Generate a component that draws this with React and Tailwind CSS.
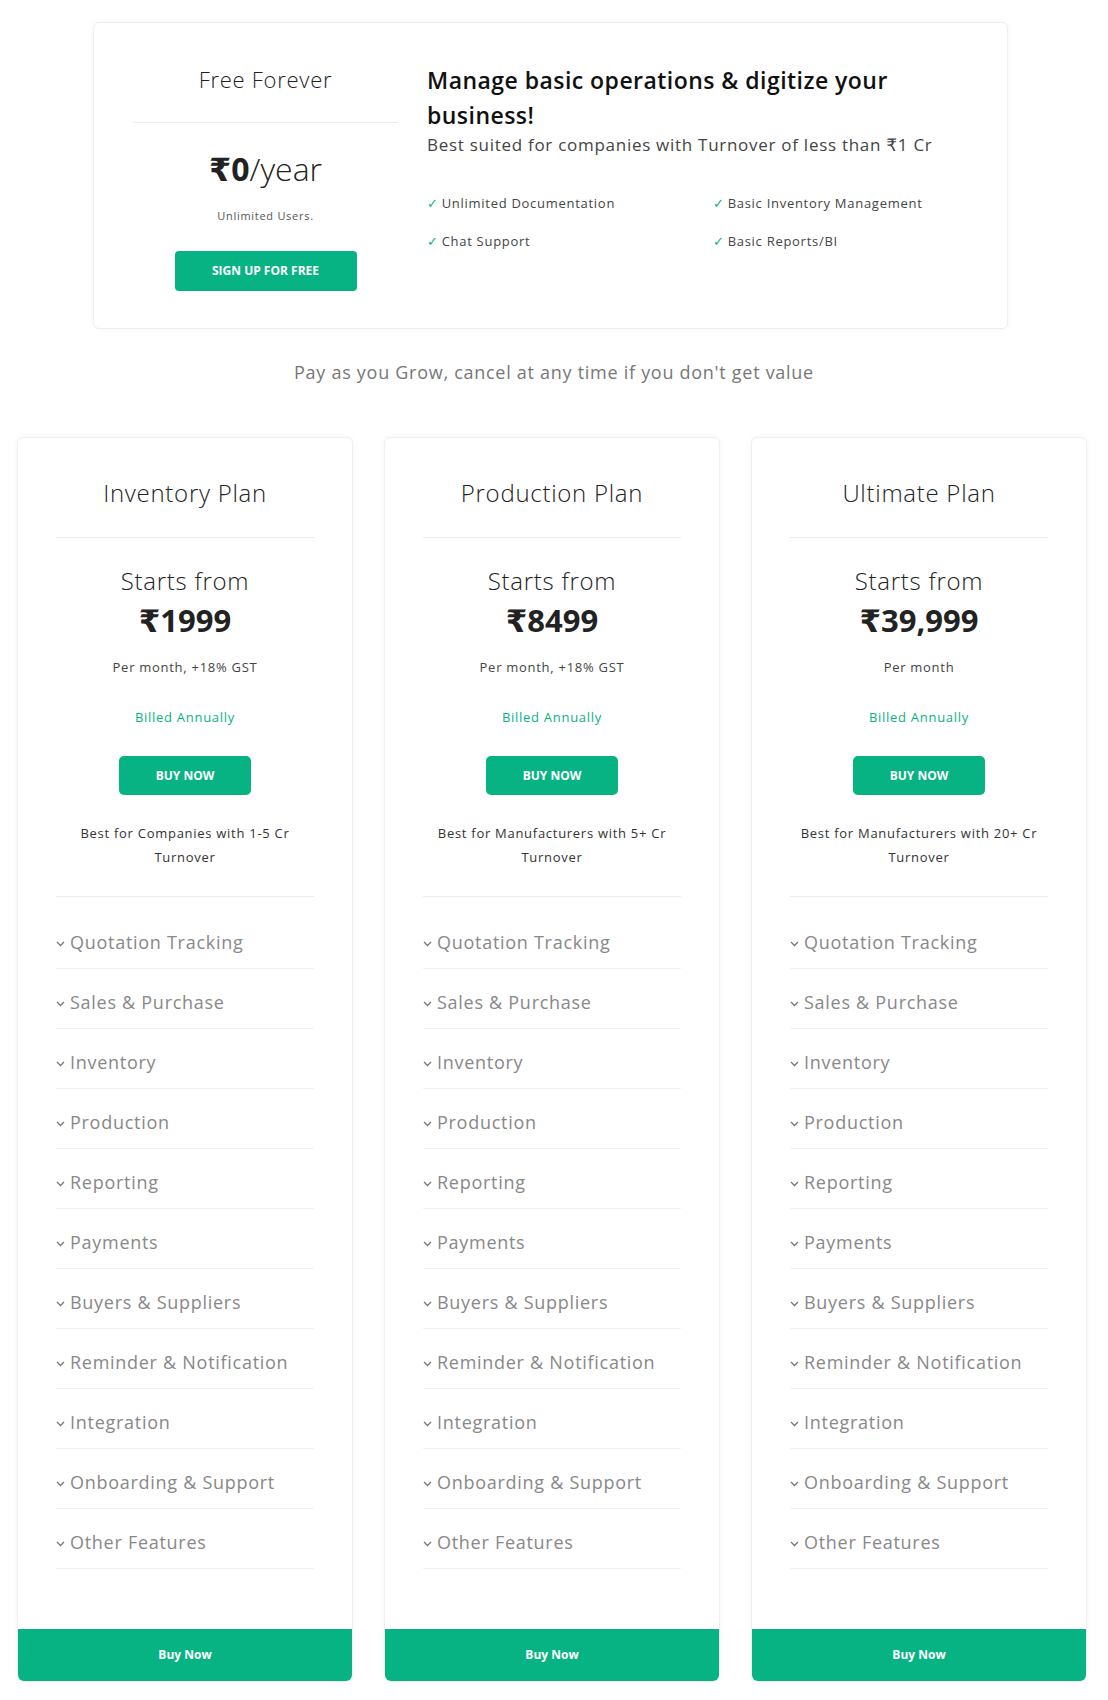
import React from 'react';

const plans = [
  {
    name: 'Inventory Plan',
    price: '₹1999',
    per: 'Per month, +18% GST',
    best: ['Best for Companies with 1-5 Cr', 'Turnover'],
  },
  {
    name: 'Production Plan',
    price: '₹8499',
    per: 'Per month, +18% GST',
    best: ['Best for Manufacturers with 5+ Cr', 'Turnover'],
  },
  {
    name: 'Ultimate Plan',
    price: '₹39,999',
    per: 'Per month',
    best: ['Best for Manufacturers with 20+ Cr', 'Turnover'],
  },
];

const features = [
  'Quotation Tracking',
  'Sales & Purchase',
  'Inventory',
  'Production',
  'Reporting',
  'Payments',
  'Buyers & Suppliers',
  'Reminder & Notification',
  'Integration',
  'Onboarding & Support',
  'Other Features',
];

const freeFeatures = [
  'Unlimited Documentation',
  'Basic Inventory Management',
  'Chat Support',
  'Basic Reports/BI',
];

const Chevron = () => (
  <svg width="9" height="6" viewBox="0 0 9 6" className="mr-[5px] mt-[3px] shrink-0">
    <path d="M1 1l3.5 3.5L8 1" fill="none" stroke="#777" strokeWidth="1.3" />
  </svg>
);

const PlanCard = ({ plan }) => (
  <div className="flex flex-col rounded-md border border-[#efefef] bg-white shadow-[0_0_6px_rgba(0,0,0,0.04)]">
    <div className="px-[38px] pt-[38px] text-center">
      <h3 className="text-[24px] font-light leading-[34px] text-[#222]">{plan.name}</h3>
      <div className="mt-[27px] border-t border-[#ececec]" />
      <p className="mt-[26px] text-[24px] font-light leading-[34px] text-[#222]">Starts from</p>
      <p className="mt-[2px] text-[31px] font-bold leading-[40px] tracking-normal text-[#222]">{plan.price}</p>
      <p className="mt-[17px] text-[13px] font-medium leading-[20px] text-[#444]">{plan.per}</p>
      <p className="mt-[30px] text-[13px] font-medium leading-[20px] text-[#08b383]">Billed Annually</p>
      <button className="mt-[29px] h-[39px] w-[132px] rounded-[5px] bg-[#08b383] text-[12px] font-bold tracking-normal text-white">
        BUY NOW
      </button>
      <p className="mt-[26px] text-[13px] leading-[24px] text-[#333]">
        {plan.best[0]}
        <br />
        {plan.best[1]}
      </p>
      <div className="mt-[27px] border-t border-[#ececec]" />
      <ul className="mt-[12px]">
        {features.map((f) => (
          <li
            key={f}
            className="flex items-center border-b border-[#f2f2f2] pb-[12px] pt-[19px] text-[18px] leading-[28px] text-[#888]"
          >
            <Chevron />
            {f}
          </li>
        ))}
      </ul>
    </div>
    <div className="mt-[60px]">
      <button className="h-[52px] w-full rounded-b-md bg-[#08b383] text-[12px] font-bold tracking-normal text-white">
        Buy Now
      </button>
    </div>
  </div>
);

export default function App() {
  return (
    <div
      className="min-h-[1700px] bg-white pb-[21px] pt-[22px] tracking-[0.045em]"
      style={{ fontFamily: '"Open Sans", "DejaVu Sans", sans-serif' }}
    >
      {/* Free plan */}
      <div className="ml-[93px] flex w-[915px] rounded-md border border-[#efefef] bg-white pb-[37px] pt-[40px] shadow-[0_0_6px_rgba(0,0,0,0.04)]">
        <div className="ml-[39px] w-[265px] text-center">
          <h3 className="text-[22px] font-light leading-[32px] text-[#222]">Free Forever</h3>
          <div className="mt-[27px] border-t border-[#ececec]" />
          <p className="mt-[24px] text-[32px] leading-[44px] tracking-normal text-[#222]">
            <span className="font-bold">₹0</span>
            <span className="font-light">/year</span>
          </p>
          <p className="mt-[17px] text-[11px] leading-[16px] text-[#555]">Unlimited Users.</p>
          <button className="mt-[27px] h-[40px] w-[182px] rounded-[4px] bg-[#08b383] text-[12px] font-bold tracking-normal text-white">
            SIGN UP FOR FREE
          </button>
        </div>
        <div className="ml-[29px] flex-1 pr-[20px]">
          <h2 className="text-[23px] font-semibold leading-[35px] tracking-[0.02em] text-[#111]">
            Manage basic operations &amp; digitize your
            <br />
            business!
          </h2>
          <p className="text-[17px] leading-[24px] text-[#444]">
            Best suited for companies with Turnover of less than ₹1 Cr
          </p>
          <div className="mt-[36px] grid grid-cols-[286px_1fr] gap-y-[18px]">
            {freeFeatures.map((f) => (
              <p key={f} className="text-[13px] font-medium leading-[20px] text-[#444]">
                <span className="mr-[3px] text-[#08b383]">✓</span>
                {f}
              </p>
            ))}
          </div>
        </div>
      </div>

      <p className="mt-[29px] text-center text-[18px] leading-[28px] text-[#777]">
        Pay as you Grow, cancel at any time if you don't get value
      </p>

      {/* Paid plans */}
      <div className="mt-[51px] grid grid-cols-3 gap-[31px] pl-[17px] pr-[21px]">
        {plans.map((p) => (
          <PlanCard key={p.name} plan={p} />
        ))}
      </div>
    </div>
  );
}
